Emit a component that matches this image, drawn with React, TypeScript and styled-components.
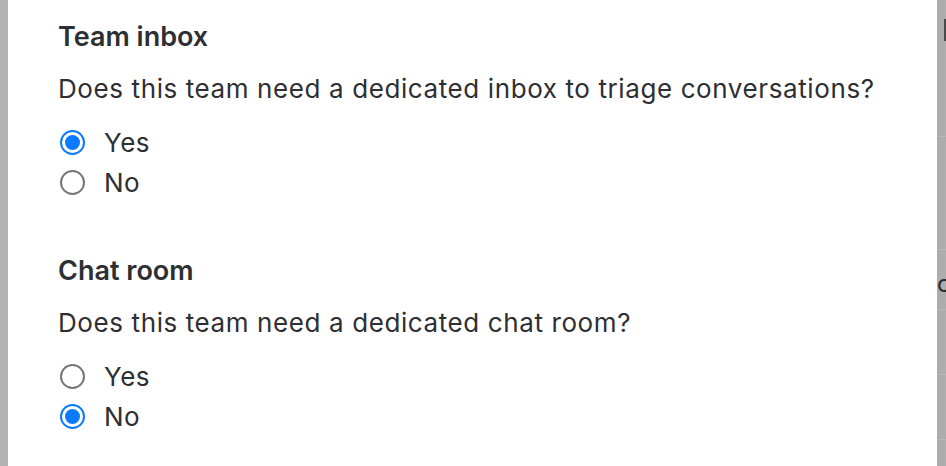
import React from "react";
import styled, { createGlobalStyle } from "styled-components";

const GlobalStyle = createGlobalStyle`
  html, body {
    margin: 0;
    padding: 0;
    background: #b3b3b3;
  }
  body {
    font-family: Inter, "Noto Sans", sans-serif;
    -webkit-font-smoothing: antialiased;
  }
`;

const Page = styled.div`
  display: flex;
  width: 946px;
  height: 466px;
  overflow: hidden;
`;

const Backdrop = styled.div`
  width: 8px;
  flex: none;
  background: #b3b3b3;
`;

const BehindPanel = styled.div`
  width: 9px;
  flex: none;
  background: #adadad;
  display: flex;
  flex-direction: column;
  overflow: hidden;
`;

const BehindRow = styled.div<{ $h: number; $pt?: number }>`
  height: ${(p) => p.$h}px;
  flex: none;
  box-sizing: border-box;
  border-bottom: 1px dotted #bdbdbd;
  display: flex;
  align-items: flex-start;
  padding-top: ${(p) => p.$pt ?? 0}px;
  color: #2a2a2a;
  font-size: 24px;
  line-height: 1;
  white-space: nowrap;
`;

const BehindBar = styled.div`
  width: 3px;
  height: 22px;
  margin-left: 7px;
  background: #4a4a4a;
`;

const Modal = styled.div`
  flex: 1;
  background: #ffffff;
  padding: 18px 0 0 50px;
  box-sizing: border-box;
  color: #2e2f33;
`;

const Section = styled.section`
  margin-bottom: 50px;
`;

const Heading = styled.h2`
  margin: 0;
  font-size: 27px;
  font-weight: 600;
  line-height: 38px;
  letter-spacing: 0px;
`;

const Question = styled.p`
  margin: 15px 0 15px;
  font-size: 26px;
  font-weight: 400;
  line-height: 36px;
  letter-spacing: 0.6px;
`;

const Options = styled.div`
  display: flex;
  flex-direction: column;
`;

const Option = styled.label`
  display: flex;
  align-items: center;
  height: 40px;
  font-size: 26px;
  letter-spacing: 0.5px;
  gap: 19px;
  padding-left: 2px;
  cursor: pointer;
`;

const Radio = styled.span<{ $checked: boolean }>`
  width: 25px;
  height: 25px;
  box-sizing: border-box;
  border-radius: 50%;
  flex: none;
  border: 2px solid ${(p) => (p.$checked ? "#0a7aff" : "#767676")};
  display: flex;
  align-items: center;
  justify-content: center;
  &::after {
    content: "";
    width: 15px;
    height: 15px;
    border-radius: 50%;
    background: #0a7aff;
    display: ${(p) => (p.$checked ? "block" : "none")};
  }
`;

type Group = { title: string; question: string; value: "Yes" | "No" };

const groups: Group[] = [
  { title: "Team inbox", question: "Does this team need a dedicated inbox to triage conversations?", value: "Yes" },
  { title: "Chat room", question: "Does this team need a dedicated chat room?", value: "No" },
];

const App = (): JSX.Element => {
  const [values, setValues] = React.useState<string[]>(groups.map((g) => g.value));

  return (
    <React.Fragment>
      <GlobalStyle />
      <Page>
        <Backdrop />
        <Modal>
          {groups.map((g, i) => (
            <Section key={g.title}>
              <Heading>{g.title}</Heading>
              <Question>{g.question}</Question>
              <Options>
                {["Yes", "No"].map((opt) => (
                  <Option
                    key={opt}
                    onClick={() => setValues((v) => v.map((x, j) => (j === i ? opt : x)))}
                  >
                    <Radio $checked={values[i] === opt} />
                    {opt}
                  </Option>
                ))}
              </Options>
            </Section>
          ))}
        </Modal>
        <BehindPanel>
          <BehindRow $h={137} $pt={19}>
            <BehindBar />
          </BehindRow>
          <BehindRow $h={113} />
          <BehindRow $h={60} $pt={22}>c</BehindRow>
          <BehindRow $h={65} />
          <BehindRow $h={65} />
          <BehindRow $h={30} />
        </BehindPanel>
      </Page>
    </React.Fragment>
  );
};

export default App;
